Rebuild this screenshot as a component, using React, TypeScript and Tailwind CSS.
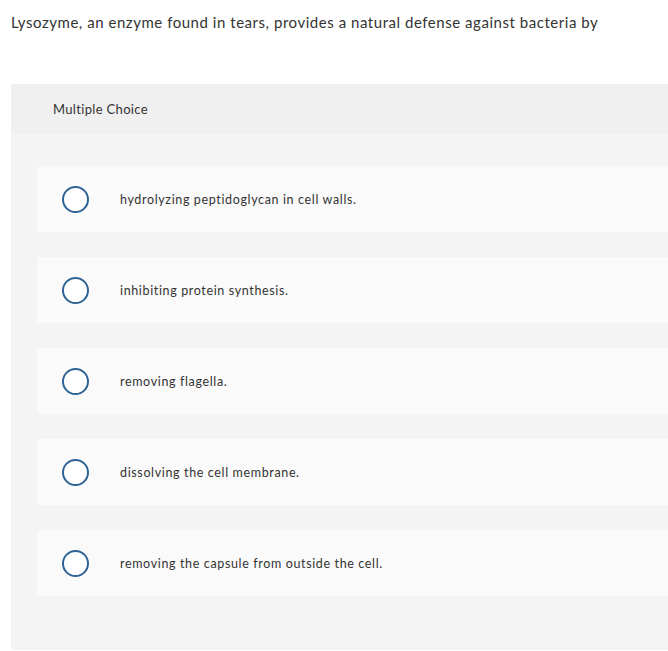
import React from "react";

const options = [
  "hydrolyzing peptidoglycan in cell walls.",
  "inhibiting protein synthesis.",
  "removing flagella.",
  "dissolving the cell membrane.",
  "removing the capsule from outside the cell.",
];

export default function App() {
  return (
    <div
      className="w-[668px] h-[651px] bg-white overflow-hidden text-[#333]"
      style={{ fontFamily: "Lato, 'Open Sans', sans-serif" }}
    >
      <p className="pl-[11px] pt-[12px] text-[15px] leading-[20px] tracking-[0.54px] text-[#333]">
        Lysozyme, an enzyme found in tears, provides a natural defense against bacteria by
      </p>
      <div className="ml-[11px] mt-[52px] h-[566px] bg-[#f4f4f4] rounded-bl-[3px] flex flex-col">
        <div className="h-[50px] bg-[#f0f0f0] flex items-center pl-[42px] pt-[1px] text-[13px] tracking-[0.33px] text-[#333]">
          Multiple Choice
        </div>
        <div className="pl-[26px] pt-[32px] flex flex-col gap-[25px]">
          {options.map((o) => (
            <div
              key={o}
              className="h-[66px] bg-[#fafafa] rounded-l-[3px] flex items-center"
            >
              <div className="ml-[25px] w-[27px] h-[27px] rounded-full border-[2px] border-[#2f6394] bg-white shrink-0" />
              <span className="ml-[31px] pt-[2px] text-[12.5px] tracking-[0.64px] text-[#333]">{o}</span>
            </div>
          ))}
        </div>
      </div>
    </div>
  );
}
